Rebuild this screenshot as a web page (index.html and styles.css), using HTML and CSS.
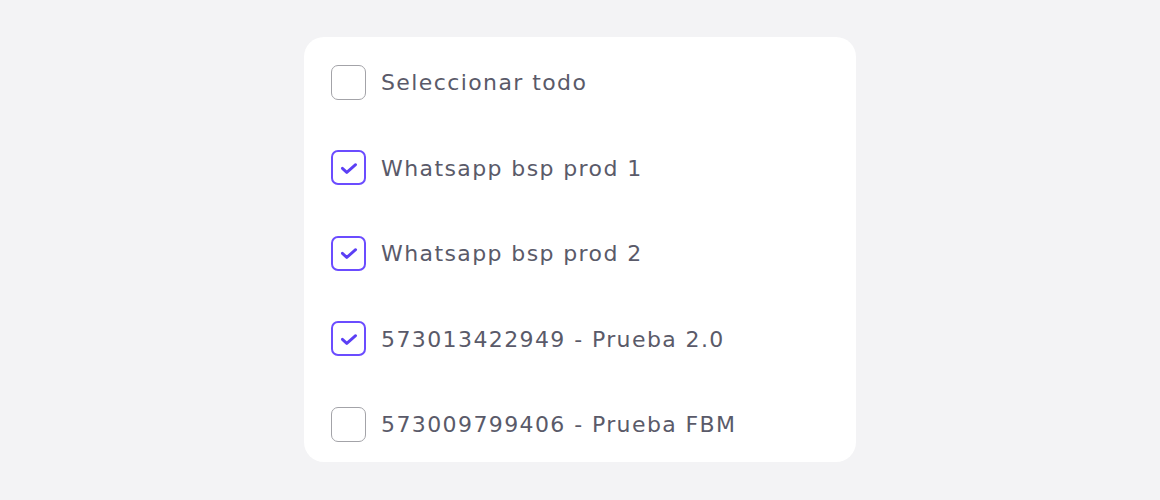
FILE: index.html
```html
<!DOCTYPE html>
<html lang="es">
<head>
<meta charset="utf-8">
<link rel="stylesheet" href="styles.css">
</head>
<body>
<div class="page">
  <div class="card">
    <label class="row">
      <span class="box"></span>
      <span class="label">Seleccionar todo</span>
    </label>
    <label class="row">
      <span class="box checked"><svg viewBox="0 0 20 20" width="22" height="22"><path d="M4 10.3l4 3.7 8-7" fill="none" stroke="#5b3ff5" stroke-width="2.6" stroke-linecap="round" stroke-linejoin="round"/></svg></span>
      <span class="label">Whatsapp bsp prod 1</span>
    </label>
    <label class="row">
      <span class="box checked"><svg viewBox="0 0 20 20" width="22" height="22"><path d="M4 10.3l4 3.7 8-7" fill="none" stroke="#5b3ff5" stroke-width="2.6" stroke-linecap="round" stroke-linejoin="round"/></svg></span>
      <span class="label">Whatsapp bsp prod 2</span>
    </label>
    <label class="row">
      <span class="box checked"><svg viewBox="0 0 20 20" width="22" height="22"><path d="M4 10.3l4 3.7 8-7" fill="none" stroke="#5b3ff5" stroke-width="2.6" stroke-linecap="round" stroke-linejoin="round"/></svg></span>
      <span class="label">573013422949 - Prueba 2.0</span>
    </label>
    <label class="row">
      <span class="box"></span>
      <span class="label">573009799406 - Prueba FBM</span>
    </label>
  </div>
</div>
</body>
</html>
```

FILE: styles.css
```css
html, body {
  margin: 0;
  padding: 0;
  background: #f3f3f5;
}
.page {
  height: 500px;
  display: flex;
  align-items: center;
  justify-content: center;
}
.card {
  width: 552px;
  box-sizing: border-box;
  background: #ffffff;
  border-radius: 20px;
  padding: 27px 27px 20px;
  margin-top: -1px;
  display: flex;
  flex-direction: column;
  gap: 49.5px;
}
.row {
  display: flex;
  align-items: center;
  gap: 15px;
  height: 36px;
}
.box {
  width: 35px;
  height: 35px;
  box-sizing: border-box;
  border: 1.5px solid #a3a3a8;
  border-radius: 7px;
  display: flex;
  align-items: center;
  justify-content: center;
  flex: none;
}
.box.checked {
  border: 2px solid #6b4cff;
}
.label {
  font-family: "DejaVu Sans", sans-serif;
  font-size: 22px;
  letter-spacing: 1.4px;
  color: #5a5a69;
  padding-top: 1px;
}
```
